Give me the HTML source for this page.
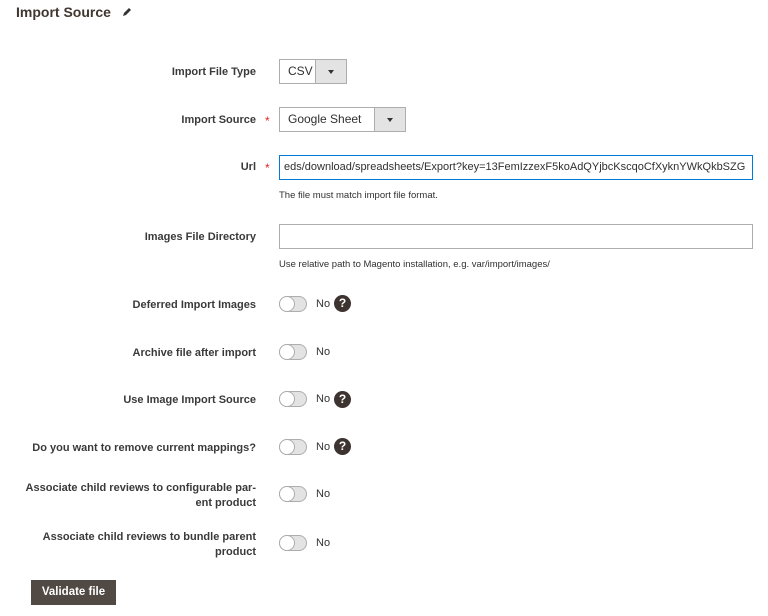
<!DOCTYPE html>
<html><head><style>
body{margin:0;width:768px;height:616px;background:#fff;font-family:"Liberation Sans",sans-serif;color:#303030;position:relative;overflow:hidden}
.a{position:absolute}
.lbl{position:absolute;right:512px;font-size:11px;font-weight:bold;text-align:right;color:#3a3a3a;line-height:15px}
.star{position:absolute;left:265px;color:#e22626;font-size:12px}
.sel{position:absolute;left:279px;height:25px;border:1px solid #adadad;font-size:12px;line-height:23px;box-sizing:border-box}
.sel .btn{position:absolute;right:0;top:0;bottom:0;width:30px;background:#e3e3e3;border-left:1px solid #adadad}
.sel .btn:after{content:"";position:absolute;left:12px;top:10px;border:3px solid transparent;border-top:4px solid #333}
.inp{position:absolute;left:279px;width:474px;height:25px;border:1px solid #adadad;box-sizing:border-box;font-size:11px;line-height:23px;padding-left:8px;overflow:hidden;white-space:nowrap}
.note{position:absolute;left:279px;font-size:9.5px;color:#303030}
.tg{position:absolute;left:279px;width:28px;height:16px;border:1px solid #adadad;border-radius:9px;background:#e3e3e3;box-sizing:border-box}
.tg:after{content:"";position:absolute;left:-1px;top:-1px;width:16px;height:16px;border-radius:50%;background:#fff;border:1px solid #adadad;box-sizing:border-box}
.no{position:absolute;left:316px;font-size:11px;color:#333}
.q{position:absolute;left:334px;width:17px;height:17px;border-radius:50%;background:#3d3330;color:#fff;font-size:12px;font-weight:bold;text-align:center;line-height:17px}
</style></head><body>
<div class="a" style="left:16px;top:4px;font-size:14px;font-weight:bold;color:#41362f">Import Source</div>
<svg class="a" style="left:122px;top:7px" width="10" height="10" viewBox="0 0 10 10"><path d="M1 9 L2 6 L7 1 L9 3 L4 8 Z" fill="#333"/></svg>

<div class="lbl" style="top:65px">Import File Type</div>
<div class="sel" style="top:59px;width:68px;padding-left:8px">CSV<div class="btn"></div></div>

<div class="lbl" style="top:113px">Import Source</div><div class="star" style="top:114px">*</div>
<div class="sel" style="top:107px;width:127px;padding-left:8px">Google Sheet<div class="btn"></div></div>

<div class="lbl" style="top:160px">Url</div><div class="star" style="top:161px">*</div>
<div class="inp" style="top:155px;border-color:#007bdb;padding-left:4px">eds/download/spreadsheets/Export?key=13FemIzzexF5koAdQYjbcKscqoCfXyknYWkQkbSZG</div>
<div class="note" style="top:190px">The file must match import file format.</div>

<div class="lbl" style="top:230px">Images File Directory</div>
<div class="inp" style="top:224px"></div>
<div class="note" style="top:259px">Use relative path to Magento installation, e.g. var/import/images/</div>

<div class="lbl" style="top:298px">Deferred Import Images</div>
<div class="tg" style="top:296px"></div><div class="no" style="top:298px">No</div><div class="q" style="top:295px">?</div>

<div class="lbl" style="top:346px">Archive file after import</div>
<div class="tg" style="top:344px"></div><div class="no" style="top:346px">No</div>

<div class="lbl" style="top:393px">Use Image Import Source</div>
<div class="tg" style="top:391px"></div><div class="no" style="top:393px">No</div><div class="q" style="top:391px">?</div>

<div class="lbl" style="top:441px">Do you want to remove current mappings?</div>
<div class="tg" style="top:439px"></div><div class="no" style="top:441px">No</div><div class="q" style="top:438px">?</div>

<div class="lbl" style="top:481px">Associate child reviews to configurable par-<br>ent product</div>
<div class="tg" style="top:486px"></div><div class="no" style="top:488px">No</div>

<div class="lbl" style="top:530px">Associate child reviews to bundle parent<br>product</div>
<div class="tg" style="top:535px"></div><div class="no" style="top:537px">No</div>

<div class="a" style="left:31px;top:580px;width:85px;height:25px;background:#514943;color:#fff;font-size:11.5px;font-weight:bold;text-align:center;line-height:25px">Validate file</div>
</body></html>
